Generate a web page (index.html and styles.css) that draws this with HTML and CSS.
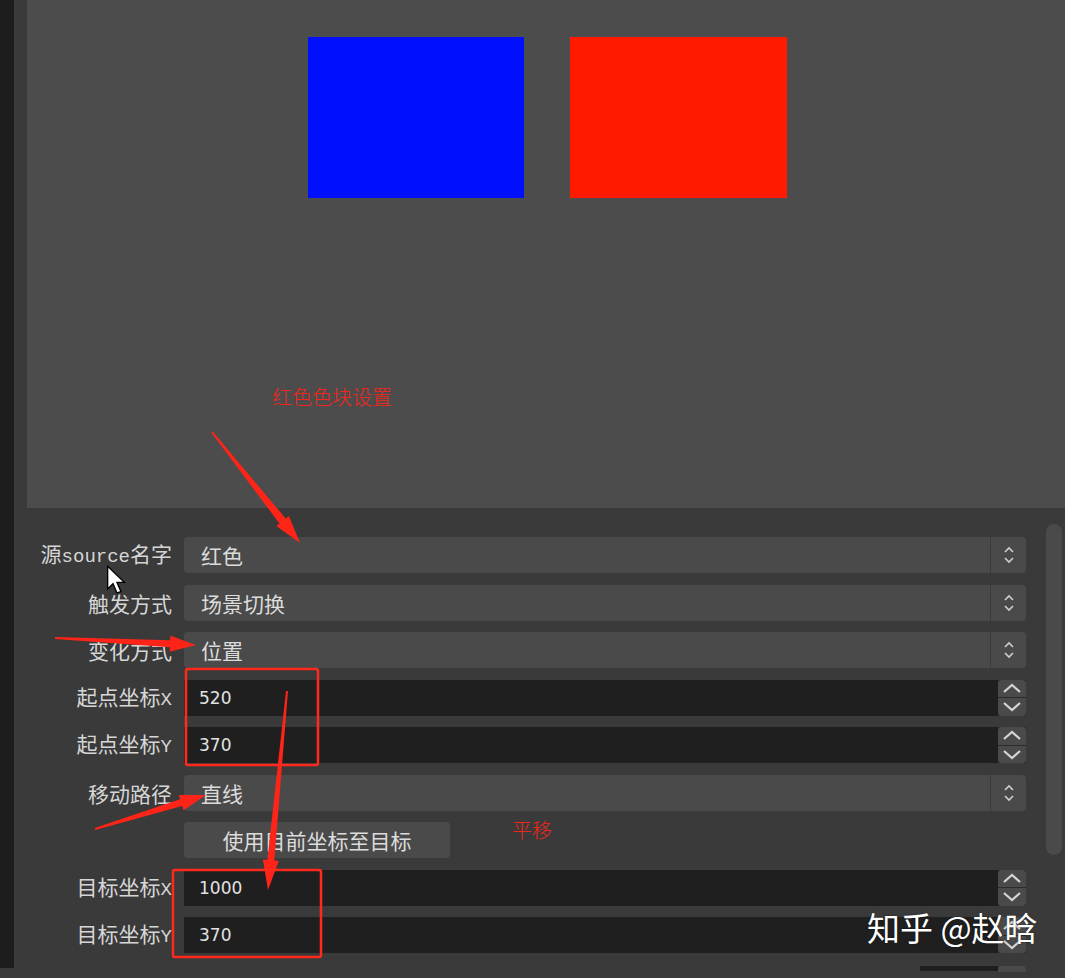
FILE: index.html
```html
<!DOCTYPE html>
<html lang="zh-CN">
<head>
  <meta charset="UTF-8" />
  <title>源属性</title>
  <link rel="stylesheet" href="styles.css">
</head>
<body>
  <div class="app">
    <div class="rail"></div>
    <div class="content">
      <div class="preview">
        <div class="source blue"></div>
        <div class="source red"></div>
      </div>

      <div class="props">
        <div class="form">
          <div class="label">源<span class="mono">source</span>名字</div>
          <div class="combo">
            <span class="combo-value">红色</span>
            <span class="combo-arrows"><svg width="12" height="22" viewBox="0 0 12 22"><path d="M2 8 L6 4 L10 8 M2 14 L6 18 L10 14" fill="none" stroke="#cfcfcf" stroke-width="1.6"/></svg></span>
          </div>

          <div class="label">触发方式</div>
          <div class="combo">
            <span class="combo-value">场景切换</span>
            <span class="combo-arrows"><svg width="12" height="22" viewBox="0 0 12 22"><path d="M2 8 L6 4 L10 8 M2 14 L6 18 L10 14" fill="none" stroke="#cfcfcf" stroke-width="1.6"/></svg></span>
          </div>

          <div class="label">变化方式</div>
          <div class="combo">
            <span class="combo-value">位置</span>
            <span class="combo-arrows"><svg width="12" height="22" viewBox="0 0 12 22"><path d="M2 8 L6 4 L10 8 M2 14 L6 18 L10 14" fill="none" stroke="#cfcfcf" stroke-width="1.6"/></svg></span>
          </div>

          <div class="label">起点坐标<span class="mono">X</span></div>
          <div class="spin">
            <span class="spin-value">520</span>
            <span class="spin-buttons">
              <span class="up"><svg width="20" height="11" viewBox="0 0 20 11"><path d="M2 9 L10 2 L18 9" fill="none" stroke="#d4d4d4" stroke-width="2.2"/></svg></span>
              <span class="down"><svg width="20" height="11" viewBox="0 0 20 11"><path d="M2 2 L10 9 L18 2" fill="none" stroke="#d4d4d4" stroke-width="2.2"/></svg></span>
            </span>
          </div>

          <div class="label">起点坐标<span class="mono">Y</span></div>
          <div class="spin">
            <span class="spin-value">370</span>
            <span class="spin-buttons">
              <span class="up"><svg width="20" height="11" viewBox="0 0 20 11"><path d="M2 9 L10 2 L18 9" fill="none" stroke="#d4d4d4" stroke-width="2.2"/></svg></span>
              <span class="down"><svg width="20" height="11" viewBox="0 0 20 11"><path d="M2 2 L10 9 L18 2" fill="none" stroke="#d4d4d4" stroke-width="2.2"/></svg></span>
            </span>
          </div>

          <div class="label">移动路径</div>
          <div class="combo">
            <span class="combo-value">直线</span>
            <span class="combo-arrows"><svg width="12" height="22" viewBox="0 0 12 22"><path d="M2 8 L6 4 L10 8 M2 14 L6 18 L10 14" fill="none" stroke="#cfcfcf" stroke-width="1.6"/></svg></span>
          </div>

          <div class="label"></div>
          <div><button class="action">使用目前坐标至目标</button></div>

          <div class="label">目标坐标<span class="mono">X</span></div>
          <div class="spin">
            <span class="spin-value">1000</span>
            <span class="spin-buttons">
              <span class="up"><svg width="20" height="11" viewBox="0 0 20 11"><path d="M2 9 L10 2 L18 9" fill="none" stroke="#d4d4d4" stroke-width="2.2"/></svg></span>
              <span class="down"><svg width="20" height="11" viewBox="0 0 20 11"><path d="M2 2 L10 9 L18 2" fill="none" stroke="#d4d4d4" stroke-width="2.2"/></svg></span>
            </span>
          </div>

          <div class="label">目标坐标<span class="mono">Y</span></div>
          <div class="spin">
            <span class="spin-value">370</span>
            <span class="spin-buttons">
              <span class="up"><svg width="20" height="11" viewBox="0 0 20 11"><path d="M2 9 L10 2 L18 9" fill="none" stroke="#d4d4d4" stroke-width="2.2"/></svg></span>
              <span class="down"><svg width="20" height="11" viewBox="0 0 20 11"><path d="M2 2 L10 9 L18 2" fill="none" stroke="#d4d4d4" stroke-width="2.2"/></svg></span>
            </span>
          </div>

          <div class="label"></div>
          <div class="stub"><span class="stub-field"></span><span class="stub-btn"></span></div>
        </div>
        <div class="scrollbar"></div>
      </div>
    </div>
  </div>

  <!-- annotations drawn over the screenshot -->
  <svg class="marks" width="1065" height="978" viewBox="0 0 1065 978">
    <g fill="#ff2418">
      <polygon points="211.3,432.5 279.5,523.5 276.3,526.1 300,543 288.9,516.1 285.7,518.6 212.7,431.5"/>
      <polygon points="55,639 169.9,647.2 169.6,651.7 196,645 170.4,635.7 170.2,640.2 55,637"/>
      <polygon points="286,690.9 267.4,859.8 262.9,859.4 268,890 278.8,860.9 274.3,860.5 288,691.1"/>
      <polygon points="95.3,830 182.2,806 183.5,810.3 206,795 178.8,795 180.1,799.3 94.7,828"/>
    </g>
    <g fill="none" stroke="#ff2a1c" stroke-width="2.5">
      <rect x="186" y="669" width="132" height="96" rx="2"/>
      <rect x="173" y="870" width="148" height="87" rx="2"/>
    </g>
  </svg>

  <svg class="cursor" width="22" height="32" viewBox="0 0 16 24">
    <path d="M1 1 L1 18 L5 14 L8 21 L11 20 L8 13 L13.5 13 Z" fill="#fff" stroke="#000" stroke-width="1"/>
  </svg>

  <div class="note note-title">红色色块设置</div>
  <div class="note note-move">平移</div>
  <div class="watermark">知乎 @赵晗</div>
</body>
</html>
```

FILE: styles.css
```css
* {
  box-sizing: border-box;
}

body {
  margin: 0;
  width: 1065px;
  height: 978px;
  overflow: hidden;
  position: relative;
  background: #3a3a3a;
  color: #dcdcdc;
  font-family: "Noto Sans CJK SC", sans-serif;
}

.app {
  display: flex;
  height: 978px;
}

.rail {
  flex: none;
  width: 14px;
  height: 968px;
  background: #1d1d1d;
}

.content {
  flex: 1;
  display: flex;
  flex-direction: column;
  min-height: 0;
}

.preview {
  flex: none;
  height: 508px;
  margin-left: 13px;
  background: #4c4c4c;
  display: flex;
  align-items: flex-start;
  gap: 46px;
  padding: 37px 0 0 281px;
}

.source {
  width: 216px;
  height: 161px;
}

.blue {
  background: #0010ff;
}

.red {
  width: 217px;
  background: #ff1a00;
}

.props {
  flex: none;
  display: flex;
  padding-top: 29px;
}

.form {
  width: 1012px;
  display: grid;
  grid-template-columns: 158px 1fr;
  grid-auto-rows: 36px;
  column-gap: 12px;
  row-gap: 11.5px;
  align-items: center;
}

.label {
  text-align: right;
  font-size: 21px;
  line-height: 36px;
  color: #d6d6d6;
  white-space: nowrap;
}

.mono {
  font-family: "Liberation Mono", monospace;
  font-size: 19px;
}

.combo {
  display: flex;
  height: 36px;
  background: #4a4a4a;
  border-radius: 4px;
}

.combo-value {
  flex: 1;
  padding-left: 17px;
  font-size: 21px;
  line-height: 36px;
  border-right: 1px solid #3a3a3a;
}

.combo-arrows {
  width: 35px;
  display: flex;
  align-items: center;
  justify-content: center;
}

.spin {
  display: flex;
  height: 36px;
}

.spin-value {
  flex: 1;
  background: #1f1f1f;
  padding-left: 15px;
  font-family: "DejaVu Sans", sans-serif;
  font-size: 17px;
  line-height: 36px;
  color: #e2e2e2;
}

.spin-buttons {
  width: 28px;
  display: flex;
  flex-direction: column;
  gap: 1px;
  background: #2c2c2c;
}

.spin-buttons span {
  flex: 1;
  display: flex;
  align-items: center;
  justify-content: center;
  background: #4a4a4a;
}

.spin-buttons .up {
  border-radius: 4px 4px 0 0;
}

.spin-buttons .down {
  border-radius: 0 0 4px 4px;
}

.action {
  width: 266px;
  height: 36px;
  border: none;
  border-radius: 4px;
  background: #4a4a4a;
  color: #dcdcdc;
  font-family: "Noto Sans CJK SC", sans-serif;
  font-size: 21px;
  padding: 0;
}

.stub {
  align-self: start;
  display: flex;
  justify-content: flex-end;
  padding-top: 1px;
}

.stub-field {
  width: 78px;
  height: 5px;
  background: #1f1f1f;
}

.stub-btn {
  width: 28px;
  height: 6px;
  background: #4a4a4a;
  border-radius: 4px 4px 0 0;
}

.scrollbar {
  flex: none;
  width: 16px;
  height: 331px;
  margin: -13px 0 0 20px;
  background: #4a4a4a;
  border-radius: 8px;
}

/* annotations */
.marks {
  position: absolute;
  left: 0;
  top: 0;
  pointer-events: none;
}

.cursor {
  position: absolute;
  left: 106px;
  top: 565px;
}

.note {
  position: absolute;
  color: #f3261c;
  font-size: 20px;
  font-weight: 300;
  line-height: 1;
  white-space: nowrap;
}

.note-title {
  left: 272px;
  top: 387px;
}

.note-move {
  left: 512px;
  top: 820px;
}

.watermark {
  position: absolute;
  left: 867px;
  top: 911px;
  font-size: 33px;
  line-height: 1;
  color: #fff;
  white-space: nowrap;
  text-shadow: 0 0 2px rgba(0, 0, 0, 0.5);
}
```
